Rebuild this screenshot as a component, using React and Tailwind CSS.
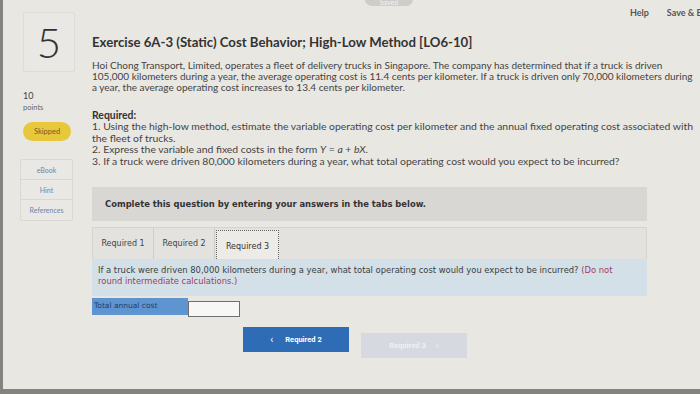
import React from 'react';

const tabs = ['Required 1', 'Required 2', 'Required 3'];

const App = () => {
  return (
    <div className="relative h-[394px] w-[700px] overflow-hidden bg-[#e9e7e2] border-l-[3px] border-b-[5px] border-[#85837f] font-[Lato,'Open_Sans',sans-serif] text-[#3e3e3e]">
      {/* saved pill in the top bar */}
      <div className="absolute left-[362px] top-[-7px] h-[13px] w-[48px] rounded-full bg-[#cfcdc9] text-center text-[7px] leading-[18px] text-[#f3f3f3]">Saved</div>

      <div className="flex">
        {/* left rail */}
        <div className="w-[89px] shrink-0 pl-[17px] pt-[12px]">
          <div className="ml-[3px] flex h-[60px] w-[52px] items-center justify-center rounded-[2px] border border-[#dedcd7] bg-[#eae8e4]">
            <span className="text-[42px] font-light leading-none text-[#333]">5</span>
          </div>
          <div className="ml-[3px] mt-[17px] text-[9px] leading-[13px] text-[#444]">10</div>
          <div className="ml-[3px] text-[7.5px] leading-[11px] text-[#666]">points</div>
          <div className="ml-[3px] mt-[9px] flex h-[19px] w-[48px] items-center justify-center rounded-full bg-[#e7c83a] text-[7.5px] text-[#6d5f24]">Skipped</div>
          <div className="mt-[18px] w-[53px] rounded-[2px] border border-[#dad8d3] bg-[#eae8e4] text-center text-[7px] text-[#6a86a8]">
            <div className="h-[20px] border-b border-[#dad8d3] leading-[20px]">eBook</div>
            <div className="h-[20px] border-b border-[#dad8d3] leading-[20px]">Hint</div>
            <div className="h-[20px] leading-[20px]">References</div>
          </div>
        </div>

        {/* main column */}
        <div className="flex-1">
          <div className="flex h-[26px] items-center justify-end gap-[18px] text-[9px] font-bold text-[#555]">
            <span>Help</span>
            <span className="mr-[-12px]">Save &amp; Exit</span>
          </div>

          <h1 className="mt-[8px] text-[13.2px] font-bold leading-[16px] text-[#333]">
            Exercise 6A-3 (Static) Cost Behavior; High-Low Method [LO6-10]
          </h1>

          <p className="mt-[10px] pr-[2px] text-[10px] leading-[11px] text-[#444]">
            Hoi Chong Transport, Limited, operates a fleet of delivery trucks in Singapore. The company has determined that if a truck is driven 105,000 kilometers during a year, the average operating cost is 11.4 cents per kilometer. If a truck is driven only 70,000 kilometers during a year, the average operating cost increases to 13.4 cents per kilometer.
          </p>

          <div className="mt-[16px] text-[10.4px] font-bold leading-[12px] text-[#333]">Required:</div>
          <div className="pr-[2px] text-[10.4px] leading-[11.5px] text-[#444]">
            <p>1. Using the high-low method, estimate the variable operating cost per kilometer and the annual fixed operating cost associated with the fleet of trucks.</p>
            <p>2. Express the variable and fixed costs in the form <i>Y</i> = <i>a</i> + <i>bX</i>.</p>
            <p>3. If a truck were driven 80,000 kilometers during a year, what total operating cost would you expect to be incurred?</p>
          </div>

          {/* question area */}
          <div className="w-[555px] font-['DejaVu_Sans',Verdana,sans-serif]">
            <div className="mt-[20px] flex h-[34px] items-center bg-[#d8d7d3] pl-[13px] text-[8.4px] font-bold text-[#333]">
              Complete this question by entering your answers in the tabs below.
            </div>

            <div className="mt-[6px] flex h-[32px] items-stretch border border-b-0 border-[#d6d4cf] bg-[#e3e2de]">
              {tabs.map((t, i) => (
                <div
                  key={t}
                  className={
                    i === 2
                      ? 'ml-[1px] mt-[2px] flex w-[63px] items-center justify-center border border-b-0 border-dotted border-[#666] bg-[#ecebe7] pt-[3px] text-[8px] text-[#333]'
                      : 'flex w-[61px] items-center justify-center border-r border-[#d0cec9] text-[8px] text-[#444]'
                  }
                >
                  {t}
                </div>
              ))}
            </div>

            <div className="bg-[#d3e0e7] pl-[6px] pr-[18px] pt-[6px] pb-[9px] text-[8.4px] leading-[11px] text-[#3d3d3d]">
              <p>
                If a truck were driven 80,000 kilometers during a year, what total operating cost would you expect to be incurred?{' '}
                <span className="text-[#a23c5c]">(Do not round intermediate calculations.)</span>
              </p>
            </div>

            <div className="mt-[2px] flex items-start">
              <div className="h-[17px] w-[96px] bg-[#5e95d0] pl-[2px] text-[7.5px] leading-[16px] text-[#1f3f6a]">Total annual cost</div>
              <div className="mt-[3px] h-[16px] w-[52px] border border-[#6f6f6f] bg-[#f7f7f5]"></div>
            </div>
          </div>

          {/* nav buttons */}
          <div className="ml-[151px] mt-[10px] flex items-start gap-[12px] font-[Roboto,sans-serif]">
            <button className="flex h-[25px] w-[106px] items-center justify-center gap-[12px] bg-[#2f6cb6] text-[7.5px] font-bold text-white">
              <span className="text-[10px] font-normal">&lsaquo;</span>
              <span>Required 2</span>
            </button>
            <button className="mt-[6px] flex h-[25px] w-[106px] items-center justify-center gap-[10px] bg-[#d6dae0] text-[7.5px] font-bold text-[#eef0f3]">
              <span>Required 3</span>
              <span className="text-[10px] font-normal">&rsaquo;</span>
            </button>
          </div>
        </div>
      </div>
    </div>
  );
};

export default App;
